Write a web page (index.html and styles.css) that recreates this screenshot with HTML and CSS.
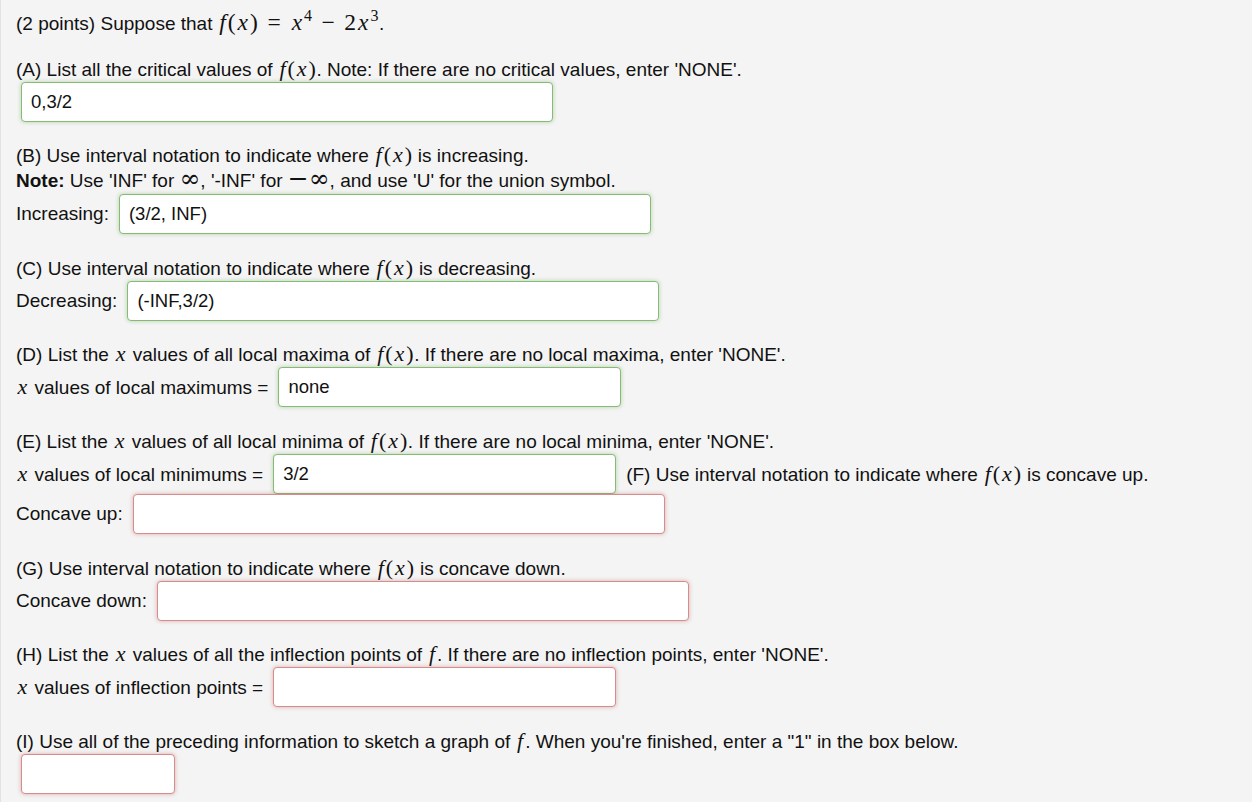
FILE: index.html
```html
<!DOCTYPE html>
<html>
<head>
<meta charset="utf-8">
<link rel="stylesheet" href="styles.css">
</head>
<body>
<div class="page">
  <div class="part">
    <div class="line">(2 points) Suppose that <span class="m big"><i>f</i>(<i>x</i>)<span class="op">=</span><i>x</i><sup>4</sup><span class="op">−</span>2<i>x</i><sup>3</sup></span>.</div>
  </div>

  <div class="part">
    <div class="line">(A) List all the critical values of <span class="m"><i>f</i>(<i>x</i>)</span>. Note: If there are no critical values, enter 'NONE'.</div>
    <div class="row first"><span class="field wide ok">0,3/2</span></div>
  </div>

  <div class="part">
    <div class="line">(B) Use interval notation to indicate where <span class="m"><i>f</i>(<i>x</i>)</span> is increasing.</div>
    <div class="line"><b>Note:</b> Use 'INF' for <span class="inf">∞</span>, '-INF' for <span class="inf">−∞</span>, and use 'U' for the union symbol.</div>
    <div class="row"><span class="label">Increasing:</span><span class="field wide ok">(3/2, INF)</span></div>
  </div>

  <div class="part">
    <div class="line">(C) Use interval notation to indicate where <span class="m"><i>f</i>(<i>x</i>)</span> is decreasing.</div>
    <div class="row"><span class="label">Decreasing:</span><span class="field wide ok">(-INF,3/2)</span></div>
  </div>

  <div class="part">
    <div class="line">(D) List the <span class="m"><i>x</i></span> values of all local maxima of <span class="m"><i>f</i>(<i>x</i>)</span>. If there are no local maxima, enter 'NONE'.</div>
    <div class="row"><span class="label"><span class="m"><i>x</i></span> values of local maximums =</span><span class="field mid ok">none</span></div>
  </div>

  <div class="part">
    <div class="line">(E) List the <span class="m"><i>x</i></span> values of all local minima of <span class="m"><i>f</i>(<i>x</i>)</span>. If there are no local minima, enter 'NONE'.</div>
    <div class="row"><span class="label"><span class="m"><i>x</i></span> values of local minimums =</span><span class="field mid ok">3/2</span><span class="after">(F) Use interval notation to indicate where <span class="m"><i>f</i>(<i>x</i>)</span> is concave up.</span></div>
    <div class="row"><span class="label">Concave up:</span><span class="field wide bad"></span></div>
  </div>

  <div class="part">
    <div class="line">(G) Use interval notation to indicate where <span class="m"><i>f</i>(<i>x</i>)</span> is concave down.</div>
    <div class="row"><span class="label">Concave down:</span><span class="field wide bad"></span></div>
  </div>

  <div class="part">
    <div class="line">(H) List the <span class="m"><i>x</i></span> values of all the inflection points of <span class="m"><i>f</i></span>. If there are no inflection points, enter 'NONE'.</div>
    <div class="row"><span class="label"><span class="m"><i>x</i></span> values of inflection points =</span><span class="field mid bad"></span></div>
  </div>

  <div class="part">
    <div class="line">(I) Use all of the preceding information to sketch a graph of <span class="m"><i>f</i></span>. When you're finished, enter a "1" in the box below.</div>
    <div class="row first"><span class="field small bad"></span></div>
  </div>
</div>
</body>
</html>
```

FILE: styles.css
```css
html, body {
  margin: 0;
  padding: 0;
  background: #f4f4f4;
}
.page {
  width: 1251px;
  height: 802px;
  box-sizing: border-box;
  border-left: 1px solid #e2e2e2;
  padding: 9px 0 0 15px;
  background: #f4f4f4;
  font-family: "Liberation Sans", Arial, sans-serif;
  font-size: 19px;
  color: #111;
  overflow: hidden;
}
.part {
  margin-bottom: 20.6px;
}
.line {
  height: 26px;
  line-height: 26px;
  white-space: nowrap;
}
.line b {
  font-weight: bold;
}
.m {
  font-family: "Liberation Serif", "DejaVu Serif", serif;
  font-size: 22px;
  letter-spacing: 0.5px;
}
.m.big {
  font-size: 23.5px;
}
.m i {
  font-style: italic;
  margin: 0 1.5px;
}
.m sup {
  font-size: 16px;
  line-height: 0;
  vertical-align: 9px;
}
.op {
  margin: 0 9px;
}
.inf {
  font-family: "DejaVu Serif", serif;
  font-size: 25px;
  line-height: 0;
}
.row {
  display: flex;
  align-items: center;
  height: 40px;
  white-space: nowrap;
}
.row.first {
  padding-left: 5px;
}
.label {
  margin-right: 10px;
}
.field {
  box-sizing: border-box;
  height: 40px;
  background: #fff;
  border: 1px solid;
  border-radius: 4px;
  padding: 0 9px;
  display: flex;
  align-items: center;
  font-size: 18.5px;
}
.wide { width: 532px; }
.mid { width: 343px; }
.small { width: 154px; }
.ok {
  border-color: #86bb76;
  box-shadow: 0 0 4px rgba(100, 170, 80, 0.45);
}
.bad {
  border-color: #d58c8c;
  box-shadow: 0 0 4px rgba(200, 80, 80, 0.45);
}
.after {
  margin-left: 10px;
}
```
